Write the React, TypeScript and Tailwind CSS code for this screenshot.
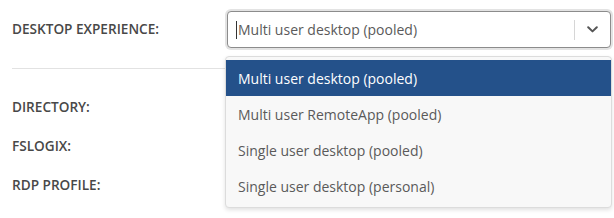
const options = [
  "Multi user desktop (pooled)",
  "Multi user RemoteApp (pooled)",
  "Single user desktop (pooled)",
  "Single user desktop (personal)",
];

function Label({ children }: { children: React.ReactNode }) {
  return <span className="text-[13.6px] font-semibold uppercase text-[#484848]">{children}</span>;
}

export default function App() {
  return (
    <div className="relative h-[218px] w-[614px] overflow-hidden bg-white font-['Open_Sans',sans-serif]">
      <div className="flex flex-col pl-3">
        <div className="flex h-[58px] items-start">
          <div className="flex h-[58px] w-[215px] items-center">
            <Label>Desktop experience:</Label>
          </div>
          <div className="relative mt-[11px] w-[384px]">
            <div className="flex h-[37px] items-center rounded-[4px] border border-[#8c8c8c] bg-white shadow-[0_0_0_2px_#e3e3e3]">
              <div className="flex flex-1 items-center pl-[8px]">
                <span className="h-[18px] w-px bg-[#333]" />
                <span className="pl-px text-[14px] text-[#5a5a5a]">Multi user desktop (pooled)</span>
              </div>
              <span className="h-[20px] w-px bg-[#d6d6d6]" />
              <div className="flex w-[35px] items-center justify-center">
                <svg width="11" height="7" viewBox="0 0 11 7" fill="none">
                  <path d="M1.2 1.2 L5.5 5.4 L9.8 1.2" stroke="#555" strokeWidth="2" strokeLinecap="round" strokeLinejoin="round" />
                </svg>
              </div>
            </div>
            <div className="absolute left-[-2px] top-[45px] z-10 w-[387px] rounded-[4px] border border-[#dcdcdc] bg-[#f8f8f8] py-[3px] shadow-[0_2px_4px_rgba(0,0,0,0.12)]">
              {options.map((o, i) => (
                <div
                  key={o}
                  className={
                    i === 0
                      ? "flex h-[36px] items-center bg-[#24518a] pl-[12px] text-[14px] text-white"
                      : "flex h-[36px] items-center pl-[12px] text-[14px] text-[#5a5a5a]"
                  }
                >
                  {o}
                </div>
              ))}
            </div>
          </div>
        </div>
        <div className="mt-[10px] h-px w-[590px] bg-[#e2e2e2]" />
        <div className="mt-[19px] flex flex-col">
          <div className="flex h-[39px] items-center">
            <Label>Directory:</Label>
          </div>
          <div className="flex h-[39px] items-center">
            <Label>FSLogix:</Label>
          </div>
          <div className="flex h-[39px] items-center">
            <Label>RDP profile:</Label>
          </div>
        </div>
      </div>
    </div>
  );
}
